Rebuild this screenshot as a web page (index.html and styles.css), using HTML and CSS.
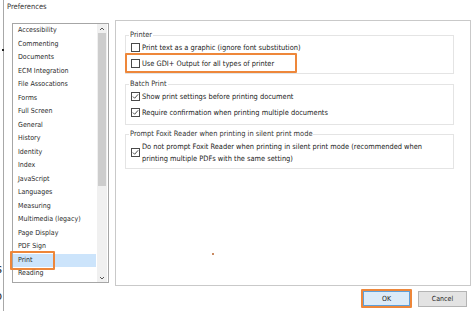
FILE: index.html
```html
<!DOCTYPE html>
<html>
<head>
<meta charset="utf-8">
<link rel="stylesheet" href="styles.css">
</head>
<body>
<div class="screen">
  <div class="behind">
    <span class="ghost ghost-s">s</span>
    <span class="ghost ghost-o">o</span>
  </div>
  <div class="dialog">
    <span class="edge-dot"></span>
    <div class="title">Preferences</div>
    <div class="main">
      <div class="list">
        <ul class="items">
          <li>Accessibility</li>
          <li>Commenting</li>
          <li>Documents</li>
          <li>ECM Integration</li>
          <li>File Assocations</li>
          <li>Forms</li>
          <li>Full Screen</li>
          <li>General</li>
          <li>History</li>
          <li>Identity</li>
          <li>Index</li>
          <li>JavaScript</li>
          <li>Languages</li>
          <li>Measuring</li>
          <li>Multimedia (legacy)</li>
          <li>Page Display</li>
          <li>PDF Sign</li>
          <li class="selected">Print<span class="mark mark-print"></span></li>
          <li>Reading</li>
        </ul>
        <div class="scrollbar">
          <svg class="arrow" viewBox="0 0 8 6" width="8" height="6"><polyline points="2,4 4,2 6,4" fill="none" stroke="#555" stroke-width="1"/></svg>
          <div class="thumb"></div>
          <div class="track"></div>
          <svg class="arrow" viewBox="0 0 8 6" width="8" height="6"><polyline points="2,2 4,4 6,2" fill="none" stroke="#555" stroke-width="1"/></svg>
        </div>
      </div>
      <div class="panel">
        <fieldset class="group g1">
          <legend>Printer</legend>
          <div class="row"><span class="box"></span><span>Print text as a graphic (ignore font substitution)</span></div>
          <div class="row"><span class="box"></span><span>Use GDI+ Output for all types of printer</span><span class="mark mark-gdi"></span></div>
        </fieldset>
        <fieldset class="group g2">
          <legend>Batch Print</legend>
          <div class="row"><span class="box"><svg viewBox="0 0 8 8" width="7" height="7"><polyline points="1,4 3,6 7,1.5" fill="none" stroke="#333" stroke-width="1"/></svg></span><span>Show print settings before printing document</span></div>
          <div class="row"><span class="box"><svg viewBox="0 0 8 8" width="7" height="7"><polyline points="1,4 3,6 7,1.5" fill="none" stroke="#333" stroke-width="1"/></svg></span><span>Require confirmation when printing multiple documents</span></div>
        </fieldset>
        <fieldset class="group g3">
          <legend>Prompt Foxit Reader when printing in silent print mode</legend>
          <div class="row multi"><span class="box"><svg viewBox="0 0 8 8" width="7" height="7"><polyline points="1,4 3,6 7,1.5" fill="none" stroke="#333" stroke-width="1"/></svg></span><span>Do not prompt Foxit Reader when printing in silent print mode (recommended when<br>printing multiple PDFs with the same setting)</span></div>
        </fieldset>
        <span class="stray-dot"></span>
      </div>
    </div>
    <div class="footer">
      <span class="focus-ring"><button class="btn btn-ok">OK</button></span>
      <button class="btn btn-cancel">Cancel</button>
    </div>
  </div>
</div>
</body>
</html>
```

FILE: styles.css
```css
* { box-sizing: border-box; }
html, body {
  margin: 0;
  padding: 0;
  width: 474px;
  height: 311px;
  overflow: hidden;
  background: #ffffff;
}
body {
  font-family: "DejaVu Sans Condensed", "DejaVu Sans", sans-serif;
  font-stretch: condensed;
  font-size: 7px;
  color: #222;
}
.screen {
  display: flex;
  width: 474px;
  height: 311px;
}
.behind {
  position: relative;
  width: 3px;
  flex: none;
  overflow: hidden;
  background: #fff;
}
.ghost {
  position: absolute;
  font-family: "DejaVu Sans", sans-serif;
  font-size: 13px;
  color: #333;
  line-height: 1;
}
.ghost-s { left: -4px; top: 262px; }
.ghost-o { left: -5px; top: 289px; }

.dialog {
  position: relative;
  flex: 1;
  display: flex;
  flex-direction: column;
  border-left: 1px solid #a8a8a8;
  padding: 0 4px 0 8px;
  background: #fff;
}
.edge-dot {
  position: absolute;
  left: -2px;
  top: 49px;
  width: 2px;
  height: 2px;
  background: #222;
}
.title {
  height: 13px;
  line-height: 13px;
  font-size: 7.5px;
  margin-left: -5px;
  color: #333;
}
.main {
  display: flex;
  gap: 6px;
  margin-top: 7px;
  height: 266px;
  align-items: flex-start;
}
.list {
  display: flex;
  width: 97px;
  height: 260px;
  margin-top: 3px;
  border: 1px solid #a6a6a6;
  background: #fff;
}
.items {
  list-style: none;
  margin: 0;
  padding: 0;
  flex: 1;
}
.items li {
  position: relative;
  height: 13.5px;
  line-height: 13.5px;
  padding-left: 5px;
  white-space: nowrap;
  color: #2a2a2a;
}
.items li.selected {
  background: #cce4fb;
  margin-right: 1px;
}
.mark {
  position: absolute;
  border: 2px solid #ee873a;
  border-radius: 1px;
}
.mark-print {
  left: -3px;
  top: -3px;
  width: 45px;
  height: 19px;
}
.scrollbar {
  width: 10px;
  flex: none;
  display: flex;
  flex-direction: column;
  align-items: center;
  background: #f0f0f0;
  margin: 0 1px 0 0;
}
.arrow {
  flex: none;
  margin: 2px 0 1px;
}
.thumb {
  width: 8px;
  height: 153px;
  background: #cdcdcd;
  flex: none;
}
.track { flex: 1; }

.panel {
  position: relative;
  width: 356px;
  height: 266px;
  border: 1px solid #c9c9c9;
  padding: 9px 16px 0 9px;
  background: #fff;
  font-size: 7.4px;
}
.group {
  margin: 0;
  border: 1px solid #e4e4e4;
  padding: 0 4px 0 5px;
  min-width: 0;
}
.group legend {
  padding: 0 1px;
  margin-left: -2px;
  line-height: 10px;
  color: #333;
}
.g1 { padding-top: 1px; padding-bottom: 4px; }
.g2 { margin-top: 5px; padding-top: 1px; padding-bottom: 6px; }
.g3 { margin-top: 4px; padding-top: 2px; padding-bottom: 4px; }
.row {
  position: relative;
  display: flex;
  align-items: center;
  gap: 2px;
  height: 12px;
  white-space: nowrap;
}
.row + .row { margin-top: 4px; }
.row.multi {
  height: auto;
  line-height: 11.5px;
}
.box {
  width: 9px;
  height: 9px;
  flex: none;
  border: 1px solid #4a4a4a;
  background: #fff;
  display: flex;
  align-items: center;
  justify-content: center;
}
.mark-gdi {
  left: -6px;
  top: -4px;
  width: 172px;
  height: 20px;
}
.stray-dot {
  position: absolute;
  left: 96px;
  top: 232px;
  width: 2px;
  height: 2px;
  background: #c98a62;
}

.footer {
  flex: 1;
  display: flex;
  justify-content: flex-end;
  align-items: center;
  gap: 6px;
  padding-right: 4px;
}
.btn {
  font-family: inherit;
  font-size: 7px;
  color: #222;
  margin: 0;
  padding: 0;
  cursor: default;
}
.focus-ring {
  display: flex;
  border: 2px solid #ee873a;
  border-radius: 1px;
}
.btn-ok {
  width: 47px;
  height: 15px;
  border: 1px solid #5e9fd8;
  background: #dcebf8;
}
.btn-cancel {
  width: 49px;
  height: 16px;
  border: 1px solid #b4b4b4;
  background: #e3e3e3;
}
```
